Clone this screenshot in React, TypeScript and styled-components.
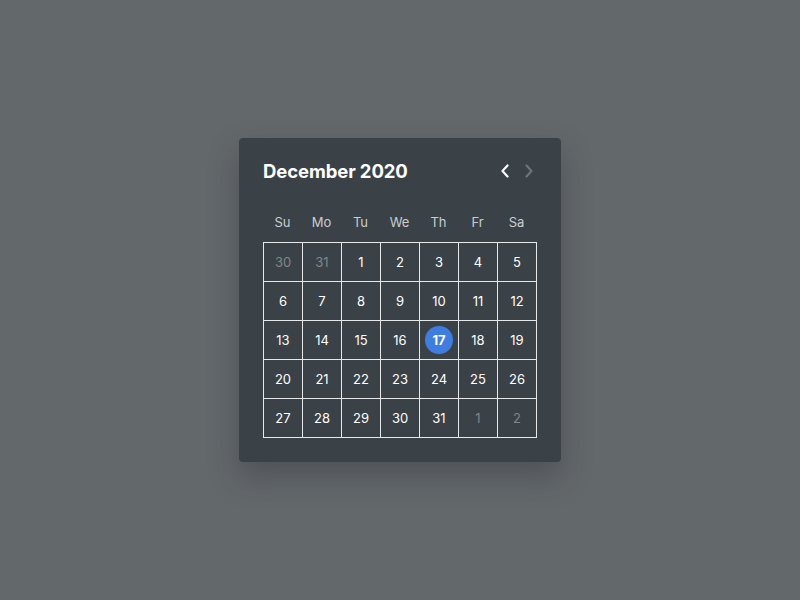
import React from "react";
import styled, { createGlobalStyle } from "styled-components";

const Global = createGlobalStyle`
  html, body { margin: 0; padding: 0; }
  body {
    background: #63686b;
    font-family: Inter, "Noto Sans", sans-serif;
    -webkit-font-smoothing: antialiased;
  }
`;

const Page = styled.div`
  width: 800px;
  height: 600px;
  display: flex;
  justify-content: center;
  align-items: flex-start;
  padding-top: 138px;
  box-sizing: border-box;
`;

const Card = styled.div`
  width: 322px;
  height: 324px;
  box-sizing: border-box;
  background: #3b4247;
  border-radius: 4px;
  box-shadow: 0 14px 30px rgba(40, 44, 48, 0.35);
  padding: 21px 24px 0 24px;
`;

const Header = styled.div`
  display: flex;
  align-items: center;
  justify-content: space-between;
  height: 24px;
`;

const Title = styled.h1`
  margin: 0;
  font-size: 18.5px;
  font-weight: 700;
  color: #ffffff;
  letter-spacing: -0.1px;
`;

const Nav = styled.div`
  display: flex;
  gap: 8px;
`;

const NavButton = styled.button<{ $dim?: boolean }>`
  width: 16px;
  height: 20px;
  padding: 0;
  border: 0;
  background: none;
  display: flex;
  align-items: center;
  justify-content: center;
  color: ${(p) => (p.$dim ? "#6d7479" : "#ffffff")};
  cursor: pointer;
`;

const Weekdays = styled.div`
  display: grid;
  grid-template-columns: repeat(7, 39px);
  margin-top: 29px;
  height: 20px;
  align-items: center;
`;

const Weekday = styled.div`
  text-align: center;
  font-size: 13px;
  color: #c9cdd0;
`;

const Grid = styled.div`
  display: grid;
  grid-template-columns: repeat(7, 38px);
  grid-auto-rows: 38px;
  gap: 1px;
  background: #e6e8ea;
  border: 1px solid #e6e8ea;
  width: max-content;
  margin-top: 10px;
`;

const Cell = styled.div`
  background: #3b4247;
  display: flex;
  align-items: center;
  justify-content: center;
`;

const Day = styled.span<{ $muted?: boolean; $selected?: boolean }>`
  width: 28px;
  height: 28px;
  border-radius: 50%;
  display: flex;
  align-items: center;
  justify-content: center;
  font-size: 13px;
  font-weight: ${(p) => (p.$selected ? 700 : 400)};
  color: ${(p) => (p.$muted ? "#80868b" : "#ffffff")};
  background: ${(p) => (p.$selected ? "#3f7de3" : "transparent")};
`;

const Chevron = ({ dir }: { dir: "left" | "right" }) => (
  <svg width="10" height="14" viewBox="0 0 10 14" fill="none">
    <path
      d={dir === "left" ? "M7.5 1.5 L2.5 7 L7.5 12.5" : "M2.5 1.5 L7.5 7 L2.5 12.5"}
      stroke="currentColor"
      strokeWidth="2.2"
      strokeLinecap="round"
      strokeLinejoin="round"
    />
  </svg>
);

const weekdays = ["Su", "Mo", "Tu", "We", "Th", "Fr", "Sa"];

type DayItem = { n: number; muted?: boolean };

const days: DayItem[] = [
  { n: 30, muted: true },
  { n: 31, muted: true },
  ...Array.from({ length: 31 }, (_, i) => ({ n: i + 1 })),
  { n: 1, muted: true },
  { n: 2, muted: true },
];

export default function App() {
  return (
    <>
      <Global />
      <Page>
        <Card>
          <Header>
            <Title>December 2020</Title>
            <Nav>
              <NavButton aria-label="Previous month">
                <Chevron dir="left" />
              </NavButton>
              <NavButton $dim aria-label="Next month">
                <Chevron dir="right" />
              </NavButton>
            </Nav>
          </Header>
          <Weekdays>
            {weekdays.map((w) => (
              <Weekday key={w}>{w}</Weekday>
            ))}
          </Weekdays>
          <Grid>
            {days.map((d, i) => (
              <Cell key={i}>
                <Day $muted={d.muted} $selected={!d.muted && d.n === 17}>
                  {d.n}
                </Day>
              </Cell>
            ))}
          </Grid>
        </Card>
      </Page>
    </>
  );
}
